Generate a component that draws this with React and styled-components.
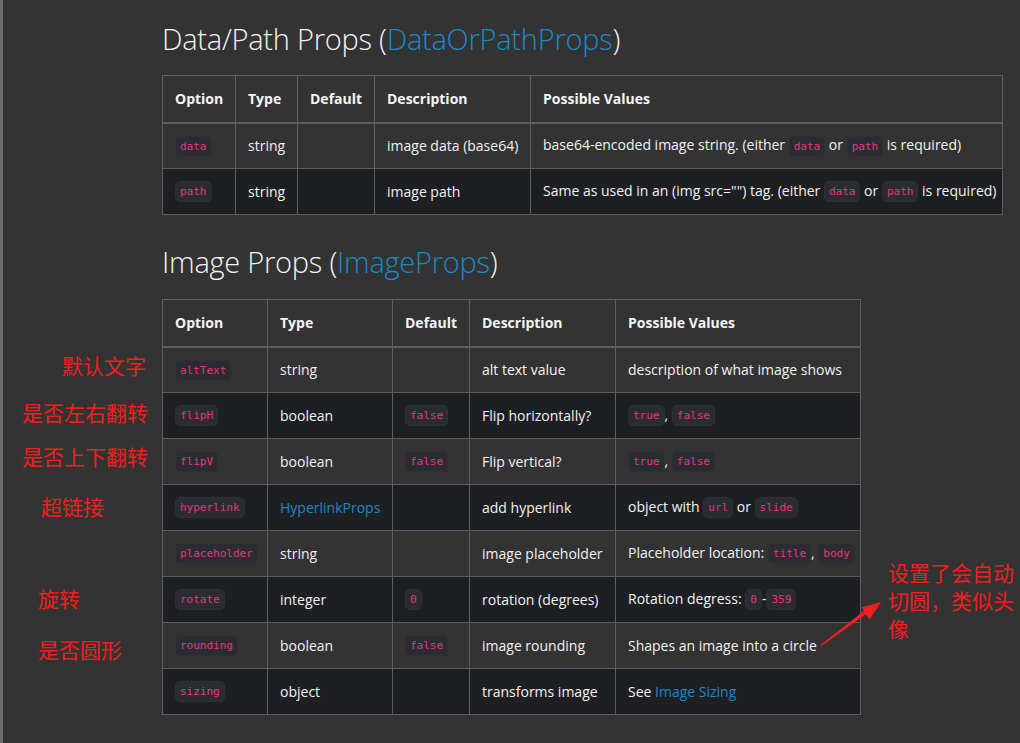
import React from "react";
import styled, { createGlobalStyle } from "styled-components";

const GlobalStyle = createGlobalStyle`
  html, body { margin: 0; padding: 0; background: #333333; }
  body { font-family: "Open Sans", "Noto Sans", sans-serif; color: #f2f2f2; }
  * { box-sizing: border-box; }
`;

const Page = styled.div`
  position: relative;
  height: 743px;
  overflow: hidden;
  border-left: 3px solid #6b6b6b;
  padding: 19px 0 0 159px;
`;

const Heading = styled.h2`
  margin: ${(p) => (p.$first ? "0 0 16px" : "27px 0 17px")};
  font-size: 29px;
  line-height: 40px;
  font-weight: 300;
  color: #f2f2f2;
  letter-spacing: -0.25px;
`;

const Link = styled.span`
  color: #1b89c6;
`;

const Table = styled.table`
  border-collapse: collapse;
  table-layout: fixed;
  width: ${(p) => p.$width}px;
  font-size: 14px;
`;

const Th = styled.th`
  height: 47px;
  padding: 0 12px;
  border: 1px solid #5b5e65;
  border-bottom-width: 2px;
  text-align: left;
  font-weight: 700;
  color: #f5f5f5;
  background: #333333;
  white-space: nowrap;
`;

const Tr = styled.tr`
  background: ${(p) => (p.$dark ? "#1e1f23" : "#333333")};
`;

const Td = styled.td`
  height: 46px;
  padding: 0 12px;
  border: 1px solid #5b5e65;
  color: #f2f2f2;
  white-space: nowrap;
  vertical-align: middle;
`;

const Code = styled.code`
  display: inline-block;
  font-family: "DejaVu Sans Mono", "Liberation Mono", monospace;
  font-size: 11px;
  line-height: 17px;
  padding: 1px 4px;
  border-radius: 5px;
  background: #2b2c31;
  border: 1px solid #2f3035;
  color: #e8337c;
  vertical-align: middle;
`;

const Note = styled.div`
  position: absolute;
  left: ${(p) => p.$x}px;
  top: ${(p) => p.$y}px;
  width: ${(p) => (p.$w ? `${p.$w}px` : "auto")};
  font-family: "Noto Sans CJK SC", "Noto Sans", sans-serif;
  font-size: 21px;
  line-height: 28px;
  color: #f31d1d;
  white-space: ${(p) => (p.$w ? "normal" : "nowrap")};
`;

const ArrowSvg = styled.svg`
  position: absolute;
  left: 805px;
  top: 590px;
`;

const t1cols = [73, 62, 77, 156, 472];
const t2cols = [105, 125, 77, 146, 245];

const Cols = ({ widths }) => (
  <colgroup>
    {widths.map((w, i) => (
      <col key={i} style={{ width: w }} />
    ))}
  </colgroup>
);

const Header = () => (
  <thead>
    <tr>
      <Th>Option</Th>
      <Th>Type</Th>
      <Th>Default</Th>
      <Th>Description</Th>
      <Th>Possible Values</Th>
    </tr>
  </thead>
);

const rows2 = [
  ["altText", "string", null, "alt text value", <>description of what image shows</>],
  ["flipH", "boolean", "false", "Flip horizontally?", <><Code>true</Code>, <Code>false</Code></>],
  ["flipV", "boolean", "false", "Flip vertical?", <><Code>true</Code>, <Code>false</Code></>],
  ["hyperlink", <Link>HyperlinkProps</Link>, null, "add hyperlink", <>object with <Code>url</Code> or <Code>slide</Code></>],
  ["placeholder", "string", null, "image placeholder", <>Placeholder location: <Code>title</Code>, <Code>body</Code></>],
  ["rotate", "integer", "0", "rotation (degrees)", <>Rotation degress: <Code>0</Code>-<Code>359</Code></>],
  ["rounding", "boolean", "false", "image rounding", <>Shapes an image into a circle</>],
  ["sizing", "object", null, "transforms image", <>See <Link>Image Sizing</Link></>],
];

export default function App() {
  return (
    <>
      <GlobalStyle />
      <Page>
        <Heading $first>
          Data/Path Props (<Link>DataOrPathProps</Link>)
        </Heading>
        <Table $width={840}>
          <Cols widths={t1cols} />
          <Header />
          <tbody>
            <Tr>
              <Td><Code>data</Code></Td>
              <Td>string</Td>
              <Td></Td>
              <Td>image data (base64)</Td>
              <Td>
                base64-encoded image string. (either <Code>data</Code> or <Code>path</Code> is required)
              </Td>
            </Tr>
            <Tr $dark>
              <Td><Code>path</Code></Td>
              <Td>string</Td>
              <Td></Td>
              <Td>image path</Td>
              <Td>
                Same as used in an (img src="") tag. (either <Code>data</Code> or <Code>path</Code> is required)
              </Td>
            </Tr>
          </tbody>
        </Table>

        <Heading>
          Image Props (<Link>ImageProps</Link>)
        </Heading>
        <Table $width={698}>
          <Cols widths={t2cols} />
          <Header />
          <tbody>
            {rows2.map(([opt, type, def, desc, vals], i) => (
              <Tr key={opt} $dark={i % 2 === 1}>
                <Td><Code>{opt}</Code></Td>
                <Td>{type}</Td>
                <Td>{def && <Code>{def}</Code>}</Td>
                <Td>{desc}</Td>
                <Td>{vals}</Td>
              </Tr>
            ))}
          </tbody>
        </Table>

        <Note $x={59} $y={351}>默认文字</Note>
        <Note $x={19} $y={398}>是否左右翻转</Note>
        <Note $x={19} $y={442}>是否上下翻转</Note>
        <Note $x={38} $y={492}>超链接</Note>
        <Note $x={35} $y={584}>旋转</Note>
        <Note $x={35} $y={635}>是否圆形</Note>
        <Note $x={885} $y={558} $w={130}>设置了会自动切圆，类似头像</Note>

        <ArrowSvg width="85" height="60" viewBox="805 590 85 60">
          <polygon
            fill="#f31d1d"
            points="817.5,645 818.5,646 862.6,614.6 866.6,619.5 878,602 858.6,607.2 861.1,610.8"
          />
        </ArrowSvg>
      </Page>
    </>
  );
}
